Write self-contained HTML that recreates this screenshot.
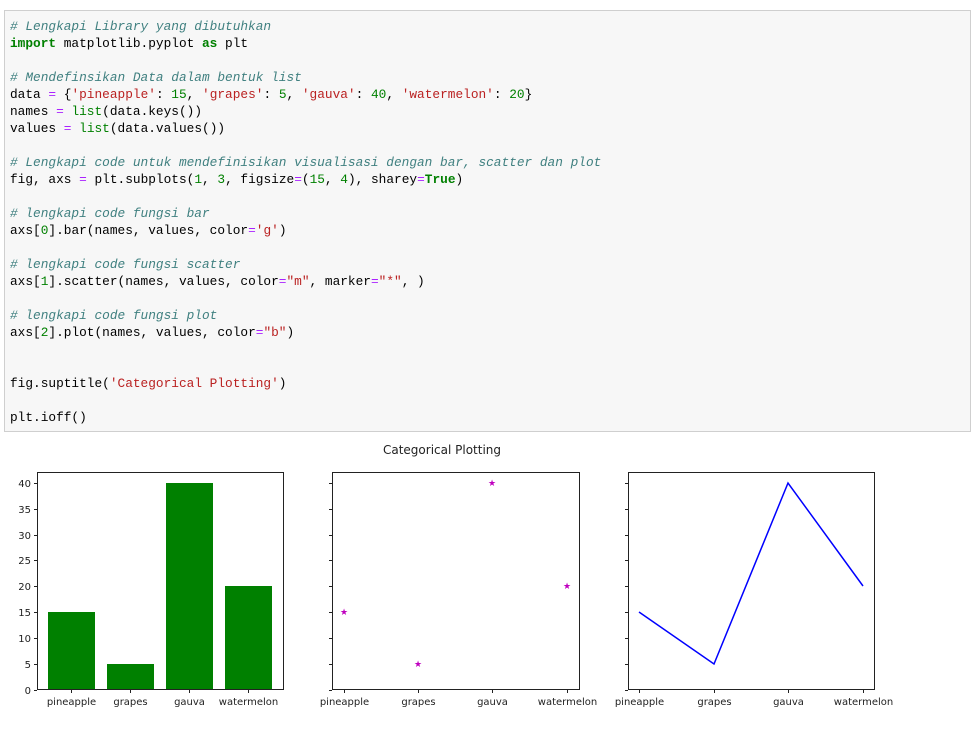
<!DOCTYPE html>
<html><head><meta charset="utf-8"><style>
body{margin:0;background:#fff;width:979px;height:731px;overflow:hidden;position:relative}
.cell{position:absolute;left:4px;top:10px;width:967px;height:422px;background:#f7f7f7;border:1px solid #cfcfcf;box-sizing:border-box}
pre{margin:0;position:absolute;left:5px;top:7px;font-family:"Liberation Mono",monospace;font-size:12.8px;line-height:17px;color:#000}
.c{color:#408080;font-style:italic}.k{color:#008000;font-weight:bold}.o{color:#aa22ff}.s{color:#ba2121}.n{color:#008000}.b{color:#008000}
svg{position:absolute;left:0;top:0}
svg text{font-family:"DejaVu Sans",sans-serif;font-size:10px;fill:#222}
</style></head><body>
<div class="cell"><pre><span class="c"># Lengkapi Library yang dibutuhkan</span>
<span class="k">import</span> matplotlib.pyplot <span class="k">as</span> plt

<span class="c"># Mendefinsikan Data dalam bentuk list</span>
data <span class="o">=</span> {<span class="s">'pineapple'</span>: <span class="n">15</span>, <span class="s">'grapes'</span>: <span class="n">5</span>, <span class="s">'gauva'</span>: <span class="n">40</span>, <span class="s">'watermelon'</span>: <span class="n">20</span>}
names <span class="o">=</span> <span class="b">list</span>(data.keys())
values <span class="o">=</span> <span class="b">list</span>(data.values())

<span class="c"># Lengkapi code untuk mendefinisikan visualisasi dengan bar, scatter dan plot</span>
fig, axs <span class="o">=</span> plt.subplots(<span class="n">1</span>, <span class="n">3</span>, figsize<span class="o">=</span>(<span class="n">15</span>, <span class="n">4</span>), sharey<span class="o">=</span><span class="k">True</span>)

<span class="c"># lengkapi code fungsi bar</span>
axs[<span class="n">0</span>].bar(names, values, color<span class="o">=</span><span class="s">'g'</span>)

<span class="c"># lengkapi code fungsi scatter</span>
axs[<span class="n">1</span>].scatter(names, values, color<span class="o">=</span><span class="s">"m"</span>, marker<span class="o">=</span><span class="s">"*"</span>, )

<span class="c"># lengkapi code fungsi plot</span>
axs[<span class="n">2</span>].plot(names, values, color<span class="o">=</span><span class="s">"b"</span>)


fig.suptitle(<span class="s">'Categorical Plotting'</span>)

plt.ioff()</pre></div>
<svg width="979" height="731">
<text x="442" y="454" text-anchor="middle" style="font-size:12px">Categorical Plotting</text>
<g fill="#008000">
<rect x="48" y="612" width="47" height="78"/>
<rect x="107" y="664" width="47" height="26"/>
<rect x="166" y="483" width="47" height="207"/>
<rect x="225" y="586" width="47" height="104"/>
</g>
<polyline points="639,612 714,664 788,483 863,586" fill="none" stroke="#0000ff" stroke-width="1.5"/>
<g>
<text x="344" y="615" text-anchor="middle" style="fill:#bf00bf;font-size:9px">★</text>
<text x="418" y="667" text-anchor="middle" style="fill:#bf00bf;font-size:9px">★</text>
<text x="492" y="486" text-anchor="middle" style="fill:#bf00bf;font-size:9px">★</text>
<text x="567" y="589" text-anchor="middle" style="fill:#bf00bf;font-size:9px">★</text>
</g>
<g fill="none" stroke="#222" stroke-width="1">
<rect x="37.5" y="472.5" width="246" height="217"/>
<rect x="332.5" y="472.5" width="247" height="217"/>
<rect x="628.5" y="472.5" width="246" height="217"/>
<path d="M34 690.5h3M34 664.5h3M34 638.5h3M34 612.5h3M34 586.5h3M34 560.5h3M34 535.5h3M34 509.5h3M34 483.5h3
M329 690.5h3M329 664.5h3M329 638.5h3M329 612.5h3M329 586.5h3M329 560.5h3M329 535.5h3M329 509.5h3M329 483.5h3
M625 690.5h3M625 664.5h3M625 638.5h3M625 612.5h3M625 586.5h3M625 560.5h3M625 535.5h3M625 509.5h3M625 483.5h3
M71.5 690v3M130.5 690v3M189.5 690v3M248.5 690v3
M344.5 690v3M418.5 690v3M492.5 690v3M567.5 690v3
M639.5 690v3M714.5 690v3M788.5 690v3M863.5 690v3"/>
</g>
<g text-anchor="end">
<text x="31" y="694">0</text><text x="31" y="668">5</text><text x="31" y="642">10</text><text x="31" y="616">15</text><text x="31" y="590">20</text><text x="31" y="564">25</text><text x="31" y="539">30</text><text x="31" y="513">35</text><text x="31" y="487">40</text>
</g>
<g text-anchor="middle">
<text x="71.5" y="705">pineapple</text><text x="130.5" y="705">grapes</text><text x="189.5" y="705">gauva</text><text x="248.5" y="705">watermelon</text>
<text x="344.5" y="705">pineapple</text><text x="418.5" y="705">grapes</text><text x="492.5" y="705">gauva</text><text x="567.5" y="705">watermelon</text>
<text x="639.5" y="705">pineapple</text><text x="714.5" y="705">grapes</text><text x="788.5" y="705">gauva</text><text x="863.5" y="705">watermelon</text>
</g>
</svg>
</body></html>
